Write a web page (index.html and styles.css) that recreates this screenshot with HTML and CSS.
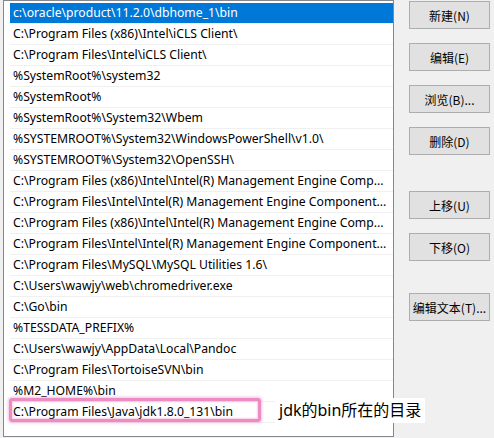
FILE: index.html
```html
<!DOCTYPE html>
<html>
<head>
<meta charset="utf-8">
<link rel="stylesheet" href="styles.css">
</head>
<body>
<div class="dialog">
  <div class="list">
    <div class="row selected">c:\oracle\product\11.2.0\dbhome_1\bin</div>
    <div class="row">C:\Program Files (x86)\Intel\iCLS Client\</div>
    <div class="row">C:\Program Files\Intel\iCLS Client\</div>
    <div class="row">%SystemRoot%\system32</div>
    <div class="row">%SystemRoot%</div>
    <div class="row">%SystemRoot%\System32\Wbem</div>
    <div class="row">%SYSTEMROOT%\System32\WindowsPowerShell\v1.0\</div>
    <div class="row">%SYSTEMROOT%\System32\OpenSSH\</div>
    <div class="row">C:\Program Files (x86)\Intel\Intel(R) Management Engine Comp...</div>
    <div class="row">C:\Program Files\Intel\Intel(R) Management Engine Component...</div>
    <div class="row">C:\Program Files (x86)\Intel\Intel(R) Management Engine Comp...</div>
    <div class="row">C:\Program Files\Intel\Intel(R) Management Engine Component...</div>
    <div class="row">C:\Program Files\MySQL\MySQL Utilities 1.6\</div>
    <div class="row">C:\Users\wawjy\web\chromedriver.exe</div>
    <div class="row">C:\Go\bin</div>
    <div class="row">%TESSDATA_PREFIX%</div>
    <div class="row">C:\Users\wawjy\AppData\Local\Pandoc</div>
    <div class="row">C:\Program Files\TortoiseSVN\bin</div>
    <div class="row">%M2_HOME%\bin</div>
    <div class="row">C:\Program Files\Java\jdk1.8.0_131\bin</div>
    <div class="highlight"></div>
    <div class="note">jdk的bin所在的目录</div>
  </div>
  <div class="buttons">
    <button class="btn">新建(N)</button>
    <button class="btn">编辑(E)</button>
    <button class="btn">浏览(B)...</button>
    <button class="btn">删除(D)</button>
    <button class="btn gap">上移(U)</button>
    <button class="btn">下移(O)</button>
    <button class="btn gap-small">编辑文本(T)...</button>
  </div>
</div>
</body>
</html>
```
FILE: styles.css
```css
html, body {
  margin: 0;
  padding: 0;
  background: #f0f0f0;
}
body {
  width: 494px;
  height: 438px;
  overflow: hidden;
  font-family: "Noto Sans", "Noto Sans CJK SC", sans-serif;
  font-size: 12.2px;
  color: #000;
}
.dialog {
  display: flex;
  align-items: flex-start;
}
.list {
  position: relative;
  margin-left: 3px;
  width: 391px;
  height: 437px;
  border: 1px solid #828790;
  background: #fff;
  padding: 2px 0 0 6px;
  box-sizing: border-box;
}
.row {
  height: 20px;
  line-height: 20px;
  border-bottom: 1px solid #f0f0f0;
  padding-left: 3px;
  white-space: nowrap;
}
.row.selected {
  background: #0078d7;
  color: #fff;
}
.highlight {
  position: absolute;
  left: 5px;
  top: 397px;
  width: 252px;
  height: 24px;
  border: 3px solid #eb8cc3;
  border-radius: 3px;
  box-shadow: 0 0 3px 1px rgba(235, 140, 195, 0.55), inset 0 0 2px 1px rgba(235, 140, 195, 0.4);
  box-sizing: border-box;
}
.note {
  position: absolute;
  left: 271px;
  top: 397px;
  padding: 0 4px;
  background: #fff;
  font-family: "Noto Sans", "Noto Sans CJK SC", sans-serif;
  font-size: 16px;
  line-height: 25px;
  white-space: nowrap;
}
.buttons {
  display: flex;
  flex-direction: column;
  margin-left: 15px;
  padding-top: 1px;
  gap: 14px;
}
.btn {
  width: 81px;
  height: 28px;
  background: #e1e1e1;
  border: 1px solid #adadad;
  font-family: "Noto Sans CJK SC", "Noto Sans", sans-serif;
  font-size: 12px;
  color: #000;
  padding: 0;
  margin: 0;
}
.btn.gap {
  margin-top: 22px;
}
.btn.gap-small {
  margin-top: 18px;
}
```
